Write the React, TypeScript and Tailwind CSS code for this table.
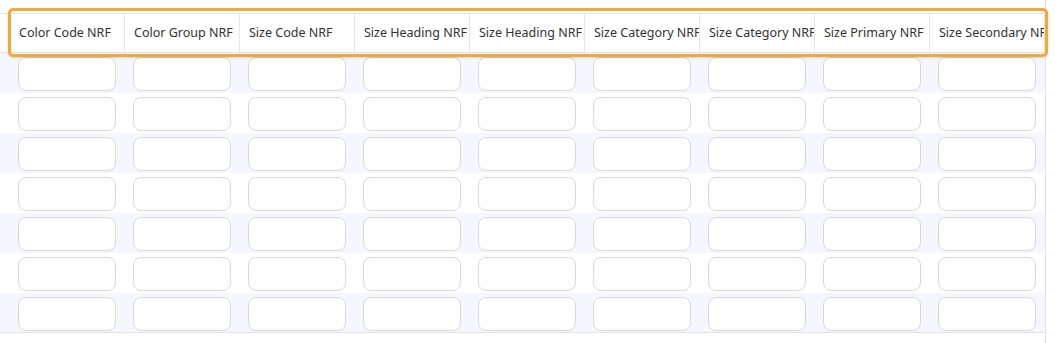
const columns = [
  'Color Code NRF',
  'Color Group NRF',
  'Size Code NRF',
  'Size Heading NRF',
  'Size Heading NRF',
  'Size Category NRF',
  'Size Category NRF',
  'Size Primary NRF',
  'Size Secondary NRF',
]

const rows = [0, 1, 2, 3, 4, 5, 6]

export default function App() {
  return (
    <div className="relative w-[1055px] h-[343px] bg-white overflow-hidden font-['Noto_Sans',sans-serif] text-[12.5px] text-[#333]">
      <div className="w-[1046px] h-full pt-[13px] border-r border-[#e3e3e3] overflow-hidden">
        {/* header */}
        <div className="flex h-[40px] border-y border-[#e3e3e3] bg-white">
          <div className="w-[10px] shrink-0" />
          {columns.map((c, i) => (
            <div
              key={i}
              className="w-[115px] shrink-0 border-r border-[#e6e6e6] pl-[9px] flex items-center whitespace-nowrap overflow-hidden"
            >
              {c}
            </div>
          ))}
        </div>
        {/* editable rows */}
        {rows.map((r) => (
          <div
            key={r}
            className={`flex h-[40px] pt-[4px] ${r % 2 === 0 ? 'bg-[#f4f7fe]' : 'bg-white'} ${r === rows.length - 1 ? 'border-b border-[#e3e3e3]' : ''}`}
          >
            <div className="w-[10px] shrink-0" />
            {columns.map((_, i) => (
              <div key={i} className="w-[115px] shrink-0 pl-[8px] pr-[9px]">
                <div className="h-[34px] rounded-[8px] border border-[#d9d9d9] bg-white" />
              </div>
            ))}
          </div>
        ))}
      </div>
      <div className="absolute left-[8px] top-[8px] w-[1040px] h-[49px] rounded-[5px] border-[3px] border-[#f5a83a] shadow-[0_1px_2px_rgba(0,0,0,0.15)]" />
    </div>
  )
}
